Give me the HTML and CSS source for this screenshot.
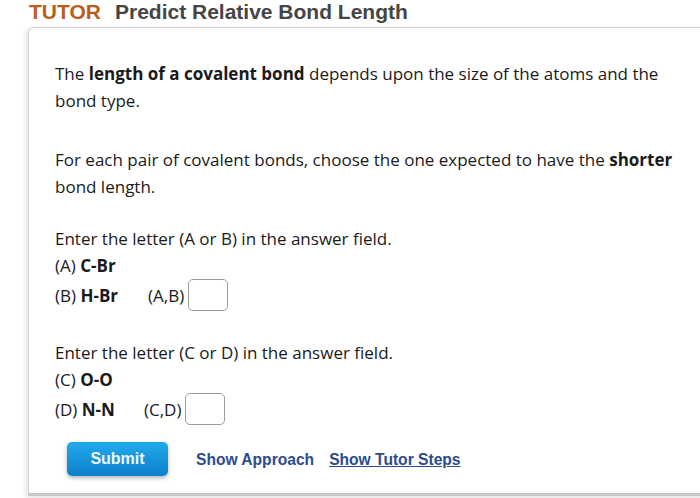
FILE: index.html
```html
<!DOCTYPE html>
<html>
<head>
<meta charset="utf-8">
<link rel="stylesheet" href="styles.css">
</head>
<body>
<h1 class="title"><span class="tutor">TUTOR</span><span class="name">Predict Relative Bond Length</span></h1>
<div class="card">
  <p class="para">The <b>length of a covalent bond</b> depends upon the size of the atoms and the bond type.</p>
  <p class="para para2">For each pair of covalent bonds, choose the one expected to have the <b>shorter</b> bond length.</p>
  <div class="group">
    <div class="line">Enter the letter (A or B) in the answer field.</div>
    <div class="line">(A) <b>C-Br</b></div>
    <div class="row"><span class="opt">(B) <b>H-Br</b></span><span class="lbl">(A,B)</span><span class="box"></span></div>
  </div>
  <div class="group group2">
    <div class="line">Enter the letter (C or D) in the answer field.</div>
    <div class="line">(C) <b>O-O</b></div>
    <div class="row"><span class="opt opt2">(D) <b>N-N</b></span><span class="lbl">(C,D)</span><span class="box"></span></div>
  </div>
  <div class="actions">
    <button class="submit">Submit</button>
    <span class="link">Show Approach</span>
    <span class="link under">Show Tutor Steps</span>
  </div>
</div>
</body>
</html>
```

FILE: styles.css
```css
html, body {
  margin: 0;
  padding: 0;
  background: #fff;
  overflow: hidden;
}
body {
  width: 700px;
  height: 498px;
}
.title {
  margin: 0;
  height: 27px;
  padding-left: 29px;
  font-family: "Liberation Sans", Arial, sans-serif;
  font-weight: bold;
  font-size: 21px;
  line-height: 23px;
  display: flex;
  gap: 14px;
}
.tutor { color: #b5601c; }
.name { color: #454545; }
.card {
  margin-left: 28px;
  width: 700px;
  height: 469px;
  border: 1px solid #d4d4d4;
  border-bottom: 3px solid #c8c8c8;
  border-radius: 6px 0 0 0;
  box-shadow: -2px 2px 5px rgba(0,0,0,0.12);
  padding: 32px 0 0 26px;
  box-sizing: border-box;
  font-family: "Open Sans", sans-serif;
  font-size: 17px;
  color: #1a1a1a;
  line-height: 27px;
}
.para {
  margin: 0;
  width: 625px;
}
.para2 { margin-top: 32px; }
.group { margin-top: 25px; }
.group2 { margin-top: 28px; }
.row {
  display: flex;
  align-items: center;
  height: 32px;
}
.opt { width: 93px; }
.opt2 { width: 89px; }
.lbl { margin-right: 4px; }
.box {
  width: 38px;
  height: 30px;
  border: 1px solid #9a9a9a;
  border-radius: 5px;
  background: #fff;
}
.actions {
  margin-top: 17px;
  margin-left: 12px;
  display: flex;
  align-items: center;
  font-family: "Liberation Sans", Arial, sans-serif;
  font-weight: bold;
  font-size: 15.6px;
}
.submit {
  width: 101px;
  height: 34px;
  border: none;
  border-radius: 5px;
  background: linear-gradient(#22aaec, #0c80cc);
  box-shadow: 0 2px 4px rgba(0,0,0,0.3);
  color: #eef8ff;
  font-family: "Liberation Sans", Arial, sans-serif;
  font-weight: bold;
  font-size: 16px;
  padding: 0;
  margin-right: 28px;
}
.link {
  color: #2c4c8e;
  margin-right: 15px;
}
.under { text-decoration: underline; }
```
